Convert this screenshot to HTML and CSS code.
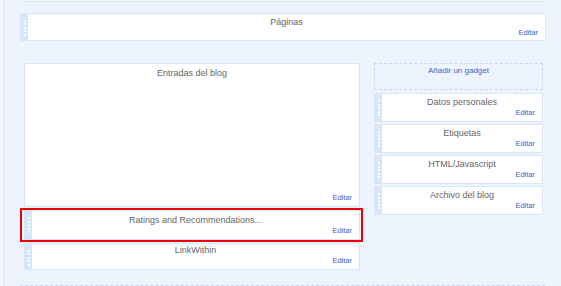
FILE: index.html
```html
<!DOCTYPE html>
<html lang="es">
<head>
  <meta charset="UTF-8" />
  <title>Diseño</title>
  <link rel="stylesheet" href="styles.css">
</head>
<body>
  <div class="layout">
    <div class="header-strip"></div>

    <div class="widget pages">
      <span class="handle"></span>
      <div class="widget-body">
        <div class="title">Páginas</div>
        <a class="edit">Editar</a>
      </div>
    </div>

    <div class="columns">
      <div class="main-col">
        <div class="widget blog">
          <div class="widget-body">
            <div class="title">Entradas del blog</div>
            <a class="edit">Editar</a>
          </div>
        </div>

        <div class="selected">
          <div class="widget">
            <span class="handle"></span>
            <div class="widget-body">
              <div class="title">Ratings and Recommendations...</div>
              <a class="edit">Editar</a>
            </div>
          </div>
        </div>

        <div class="widget short">
          <span class="handle"></span>
          <div class="widget-body">
            <div class="title">LinkWithin</div>
            <a class="edit">Editar</a>
          </div>
        </div>
      </div>

      <div class="side-col">
        <div class="add-gadget"><a>Añadir un gadget</a></div>

        <div class="widget">
          <span class="handle"></span>
          <div class="widget-body">
            <div class="title">Datos personales</div>
            <a class="edit">Editar</a>
          </div>
        </div>
        <div class="widget">
          <span class="handle"></span>
          <div class="widget-body">
            <div class="title">Etiquetas</div>
            <a class="edit">Editar</a>
          </div>
        </div>
        <div class="widget">
          <span class="handle"></span>
          <div class="widget-body">
            <div class="title">HTML/Javascript</div>
            <a class="edit">Editar</a>
          </div>
        </div>
        <div class="widget">
          <span class="handle"></span>
          <div class="widget-body">
            <div class="title">Archivo del blog</div>
            <a class="edit">Editar</a>
          </div>
        </div>
      </div>
    </div>

    <div class="footer-add"></div>
  </div>
</body>
</html>
```

FILE: styles.css
```css
:root {
  --bg: #eef4fd;
  --line: #d9e6f7;
  --handle: #d5e7fb;
  --text: #666666;
  --link: #3d62c9;
}

html, body {
  margin: 0;
  padding: 0;
  background: #f6f9fe;
  font-family: "Liberation Sans", Arial, sans-serif;
}

body {
  background: linear-gradient(to right, #f6f9fe 3px, var(--bg) 3px);
}

.layout {
  margin-left: 3px;
  width: 528px;
  height: 286px;
  padding-left: 16px;
  background: var(--bg);
  border-left: 1px solid var(--line);
  overflow: hidden;
}

.header-strip {
  height: 1px;
  background: #f4f8fe;
  border-bottom: 1px solid var(--line);
}

.widget {
  display: flex;
  background: #fff;
  border: 1px solid var(--line);
  box-sizing: border-box;
  height: 29px;
}

.handle {
  position: relative;
  flex: 0 0 7px;
  background: var(--handle);
}

.handle::before {
  content: "";
  position: absolute;
  left: 3px;
  top: 6px;
  width: 2px;
  height: 16px;
  background: repeating-linear-gradient(to bottom, #fff 0 2px, transparent 2px 3.5px);
}

.widget-body {
  flex: 1;
  display: flex;
  flex-direction: column;
  padding: 3px 7px 0;
}

.title {
  text-align: center;
  font-size: 9px;
  line-height: 11px;
  color: var(--text);
}

.edit {
  align-self: flex-end;
  font-size: 7.5px;
  line-height: 9px;
  color: var(--link);
  cursor: pointer;
}

.pages {
  margin-top: 11px;
  width: 526px;
  height: 28px;
}

.pages .widget-body {
  padding-top: 3px;
}

.columns {
  display: flex;
  gap: 14px;
  margin-top: 22px;
  padding-left: 4px;
}

.main-col {
  width: 336px;
  display: flex;
  flex-direction: column;
}

.blog {
  height: 144px;
}

.blog .widget-body {
  padding-top: 4px;
  justify-content: space-between;
  padding-bottom: 4px;
}

.selected {
  margin: 1px -3px 0 -4px;
  padding: 0 1px 0 2px;
  border: 2px solid #ee0000;
}

.selected .widget {
  height: 30px;
}

.selected .widget-body {
  padding-top: 4px;
}

.short {
  margin-top: 1px;
  height: 27px;
}

.short .widget-body {
  padding-top: 1px;
}

.side-col {
  width: 169px;
  display: flex;
  flex-direction: column;
  gap: 2px;
}

.add-gadget {
  height: 27px;
  box-sizing: border-box;
  border: 1px dashed #c9d8ef;
  text-align: center;
  padding-top: 2px;
  margin-bottom: 1px;
  font-size: 8px;
  line-height: 10px;
}

.add-gadget a {
  color: var(--link);
  cursor: pointer;
}

.footer-add {
  margin-top: 15px;
  width: 525px;
  height: 20px;
  border-top: 1px dashed #c9d8ef;
}
```
